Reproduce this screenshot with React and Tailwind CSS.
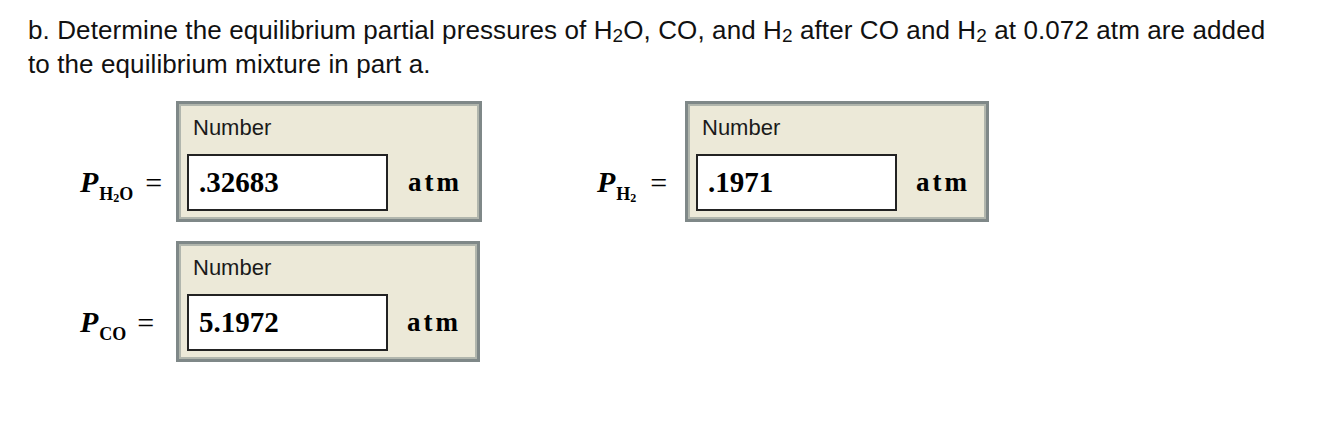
import React from "react";

const serif = { fontFamily: '"Liberation Serif", "Times New Roman", serif' };

function Label({ sub, eqMl }) {
  return (
    <div className="flex items-center text-black" style={serif}>
      <span className="text-[30px] font-bold italic leading-none">P</span>
      <span className="relative top-[12px] ml-[1px] text-[18px] font-bold leading-none">{sub}</span>
      <span className={"text-[30px] leading-none relative top-[1px] " + eqMl}>=</span>
    </div>
  );
}

function Box({ value, w }) {
  return (
    <div
      className={"h-[121px] border-[3px] border-[#7f8888] bg-[#ece9d8] shadow-[inset_0_0_0_2px_#b1b6ad] flex flex-col " + w}
    >
      <div
        className="pl-[14px] pt-[12px] text-[22px] leading-[24px] text-[#1a1a1a]"
        style={{ fontFamily: '"Liberation Sans", Arial, sans-serif' }}
      >
        Number
      </div>
      <div className="flex items-center mt-[14px] pl-[8px]">
        <div
          className="w-[201px] h-[57px] border-2 border-[#222] bg-white flex items-center pl-[10px] text-[29px] font-bold text-black"
          style={serif}
        >
          {value}
        </div>
        <div className="flex-1 flex justify-center pl-[3px] text-[27px] font-bold tracking-[3px] text-black" style={serif}>
          atm
        </div>
      </div>
    </div>
  );
}

const sub2 = "text-[19px] relative top-[3px] align-baseline";

export default function App() {
  return (
    <div className="w-[1332px] h-[424px] bg-white">
      <div
        className="pl-[28px] pt-[13px] text-[26px] leading-[34px] text-[#111] whitespace-nowrap tracking-[0.1px]"
        style={{ fontFamily: '"Liberation Sans", Arial, sans-serif' }}
      >
        b. Determine the equilibrium partial pressures of H<sub className={sub2}>2</sub>O, CO, and H<sub className={sub2}>2</sub> after CO and H<sub className={sub2}>2</sub> at 0.072 atm are added
        <br />
        to the equilibrium mixture in part a.
      </div>
      <div className="mt-[20px] flex flex-col gap-[19px]">
        <div className="flex items-start">
          <div className="w-[176px] h-[121px] pl-[80px] pt-[66px]">
            <Label eqMl="ml-[12px]" sub={<>H<span className="text-[12px] relative top-[2px]">2</span>O</>} />
          </div>
          <Box value=".32683" w="w-[306px]" />
          <div className="w-[203px] h-[121px] pl-[115px] pt-[66px]">
            <Label eqMl="ml-[14px]" sub={<>H<span className="text-[12px] relative top-[2px]">2</span></>} />
          </div>
          <Box value=".1971" w="w-[304px]" />
        </div>
        <div className="flex items-start">
          <div className="w-[176px] h-[121px] pl-[80px] pt-[66px]">
            <Label eqMl="ml-[11px]" sub="CO" />
          </div>
          <Box value="5.1972" w="w-[304px]" />
        </div>
      </div>
    </div>
  );
}
